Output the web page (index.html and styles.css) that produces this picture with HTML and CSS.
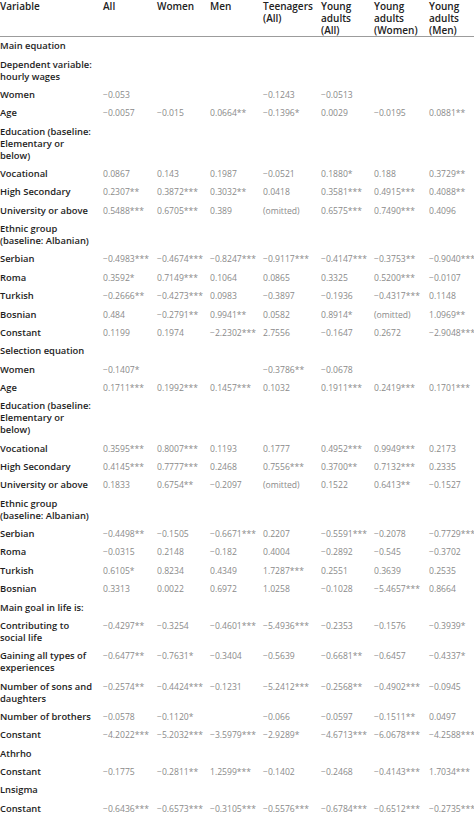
FILE: index.html
```html
<!DOCTYPE html>
<html>
<head>
<meta charset="utf-8">
<link rel="stylesheet" href="styles.css">
</head>
<body>
<table class="tbl">
<colgroup>
<col class="c0"><col class="c1"><col class="c2"><col class="c3"><col class="c4"><col class="c5"><col class="c6"><col class="c7">
</colgroup>
<thead>
<tr>
<th>Variable</th><th>All</th><th>Women</th><th>Men</th><th>Teenagers<br>(All)</th><th>Young<br>adults<br>(All)</th><th>Young<br>adults<br>(Women)</th><th>Young<br>adults<br>(Men)</th>
</tr>
</thead>
<tbody>
<tr><td class="l">Main equation</td><td></td><td></td><td></td><td></td><td></td><td></td><td></td></tr>
<tr><td class="l">Dependent variable:<br>hourly wages</td><td></td><td></td><td></td><td></td><td></td><td></td><td></td></tr>
<tr><td class="l">Women</td><td class="v">−0.053</td><td></td><td></td><td class="v">−0.1243</td><td class="v">−0.0513</td><td></td><td></td></tr>
<tr><td class="l">Age</td><td class="v">−0.0057</td><td class="v">−0.015</td><td class="v">0.0664**</td><td class="v">−0.1396*</td><td class="v">0.0029</td><td class="v">−0.0195</td><td class="v">0.0881**</td></tr>
<tr><td class="l">Education (baseline:<br>Elementary or<br>below)</td><td></td><td></td><td></td><td></td><td></td><td></td><td></td></tr>
<tr><td class="l">Vocational</td><td class="v">0.0867</td><td class="v">0.143</td><td class="v">0.1987</td><td class="v">−0.0521</td><td class="v">0.1880*</td><td class="v">0.188</td><td class="v">0.3729**</td></tr>
<tr><td class="l">High Secondary</td><td class="v">0.2307**</td><td class="v">0.3872***</td><td class="v">0.3032**</td><td class="v">0.0418</td><td class="v">0.3581***</td><td class="v">0.4915***</td><td class="v">0.4088**</td></tr>
<tr><td class="l">University or above</td><td class="v">0.5488***</td><td class="v">0.6705***</td><td class="v">0.389</td><td class="v">(omitted)</td><td class="v">0.6575***</td><td class="v">0.7490***</td><td class="v">0.4096</td></tr>
<tr><td class="l">Ethnic group<br>(baseline: Albanian)</td><td></td><td></td><td></td><td></td><td></td><td></td><td></td></tr>
<tr><td class="l">Serbian</td><td class="v">−0.4983***</td><td class="v">−0.4674***</td><td class="v">−0.8247***</td><td class="v">−0.9117***</td><td class="v">−0.4147***</td><td class="v">−0.3753**</td><td class="v">−0.9040***</td></tr>
<tr><td class="l">Roma</td><td class="v">0.3592*</td><td class="v">0.7149***</td><td class="v">0.1064</td><td class="v">0.0865</td><td class="v">0.3325</td><td class="v">0.5200***</td><td class="v">−0.0107</td></tr>
<tr><td class="l">Turkish</td><td class="v">−0.2666**</td><td class="v">−0.4273***</td><td class="v">0.0983</td><td class="v">−0.3897</td><td class="v">−0.1936</td><td class="v">−0.4317***</td><td class="v">0.1148</td></tr>
<tr><td class="l">Bosnian</td><td class="v">0.484</td><td class="v">−0.2791**</td><td class="v">0.9941**</td><td class="v">0.0582</td><td class="v">0.8914*</td><td class="v">(omitted)</td><td class="v">1.0969**</td></tr>
<tr><td class="l">Constant</td><td class="v">0.1199</td><td class="v">0.1974</td><td class="v">−2.2302***</td><td class="v">2.7556</td><td class="v">−0.1647</td><td class="v">0.2672</td><td class="v">−2.9048***</td></tr>
<tr><td class="l">Selection equation</td><td></td><td></td><td></td><td></td><td></td><td></td><td></td></tr>
<tr><td class="l">Women</td><td class="v">−0.1407*</td><td></td><td></td><td class="v">−0.3786**</td><td class="v">−0.0678</td><td></td><td></td></tr>
<tr><td class="l">Age</td><td class="v">0.1711***</td><td class="v">0.1992***</td><td class="v">0.1457***</td><td class="v">0.1032</td><td class="v">0.1911***</td><td class="v">0.2419***</td><td class="v">0.1701***</td></tr>
<tr><td class="l">Education (baseline:<br>Elementary or<br>below)</td><td></td><td></td><td></td><td></td><td></td><td></td><td></td></tr>
<tr><td class="l">Vocational</td><td class="v">0.3595***</td><td class="v">0.8007***</td><td class="v">0.1193</td><td class="v">0.1777</td><td class="v">0.4952***</td><td class="v">0.9949***</td><td class="v">0.2173</td></tr>
<tr><td class="l">High Secondary</td><td class="v">0.4145***</td><td class="v">0.7777***</td><td class="v">0.2468</td><td class="v">0.7556***</td><td class="v">0.3700**</td><td class="v">0.7132***</td><td class="v">0.2335</td></tr>
<tr><td class="l">University or above</td><td class="v">0.1833</td><td class="v">0.6754**</td><td class="v">−0.2097</td><td class="v">(omitted)</td><td class="v">0.1522</td><td class="v">0.6413**</td><td class="v">−0.1527</td></tr>
<tr><td class="l">Ethnic group<br>(baseline: Albanian)</td><td></td><td></td><td></td><td></td><td></td><td></td><td></td></tr>
<tr><td class="l">Serbian</td><td class="v">−0.4498**</td><td class="v">−0.1505</td><td class="v">−0.6671***</td><td class="v">0.2207</td><td class="v">−0.5591***</td><td class="v">−0.2078</td><td class="v">−0.7729***</td></tr>
<tr><td class="l">Roma</td><td class="v">−0.0315</td><td class="v">0.2148</td><td class="v">−0.182</td><td class="v">0.4004</td><td class="v">−0.2892</td><td class="v">−0.545</td><td class="v">−0.3702</td></tr>
<tr><td class="l">Turkish</td><td class="v">0.6105*</td><td class="v">0.8234</td><td class="v">0.4349</td><td class="v">1.7287***</td><td class="v">0.2551</td><td class="v">0.3639</td><td class="v">0.2535</td></tr>
<tr><td class="l">Bosnian</td><td class="v">0.3313</td><td class="v">0.0022</td><td class="v">0.6972</td><td class="v">1.0258</td><td class="v">−0.1028</td><td class="v">−5.4657***</td><td class="v">0.8664</td></tr>
<tr><td class="l">Main goal in life is:</td><td></td><td></td><td></td><td></td><td></td><td></td><td></td></tr>
<tr><td class="l">Contributing to<br>social life</td><td class="v">−0.4297**</td><td class="v">−0.3254</td><td class="v">−0.4601***</td><td class="v">−5.4936***</td><td class="v">−0.2353</td><td class="v">−0.1576</td><td class="v">−0.3939*</td></tr>
<tr><td class="l">Gaining all types of<br>experiences</td><td class="v">−0.6477**</td><td class="v">−0.7631*</td><td class="v">−0.3404</td><td class="v">−0.5639</td><td class="v">−0.6681**</td><td class="v">−0.6457</td><td class="v">−0.4337*</td></tr>
<tr><td class="l">Number of sons and<br>daughters</td><td class="v">−0.2574**</td><td class="v">−0.4424***</td><td class="v">−0.1231</td><td class="v">−5.2412***</td><td class="v">−0.2568**</td><td class="v">−0.4902***</td><td class="v">−0.0945</td></tr>
<tr><td class="l">Number of brothers</td><td class="v">−0.0578</td><td class="v">−0.1120*</td><td></td><td class="v">−0.066</td><td class="v">−0.0597</td><td class="v">−0.1511**</td><td class="v">0.0497</td></tr>
<tr><td class="l">Constant</td><td class="v">−4.2022***</td><td class="v">−5.2032***</td><td class="v">−3.5979***</td><td class="v">−2.9289*</td><td class="v">−4.6713***</td><td class="v">−6.0678***</td><td class="v">−4.2588***</td></tr>
<tr><td class="l">Athrho</td><td></td><td></td><td></td><td></td><td></td><td></td><td></td></tr>
<tr><td class="l">Constant</td><td class="v">−0.1775</td><td class="v">−0.2811**</td><td class="v">1.2599***</td><td class="v">−0.1402</td><td class="v">−0.2468</td><td class="v">−0.4143***</td><td class="v">1.7034***</td></tr>
<tr><td class="l">Lnsigma</td><td></td><td></td><td></td><td></td><td></td><td></td><td></td></tr>
<tr><td class="l">Constant</td><td class="v">−0.6436***</td><td class="v">−0.6573***</td><td class="v">−0.3105***</td><td class="v">−0.5576***</td><td class="v">−0.6784***</td><td class="v">−0.6512***</td><td class="v">−0.2735***</td></tr>
</tbody>
</table>
</body>
</html>
```
FILE: styles.css
```css
html, body {
  margin: 0;
  padding: 0;
  background: #ffffff;
}
.tbl {
  border-collapse: collapse;
  table-layout: fixed;
  width: 474px;
  font-family: "Open Sans", "DejaVu Sans", sans-serif;
}
.c0 { width: 103px; }
.c1 { width: 54px; }
.c2 { width: 53px; }
.c3 { width: 53px; }
.c4 { width: 58px; }
.c5 { width: 53px; }
.c6 { width: 55px; }
.c7 { width: 45px; }
.tbl th {
  text-align: left;
  vertical-align: top;
  font-weight: 600;
  font-size: 10px;
  line-height: 12px;
  color: #222222;
  padding: 0;
  border-bottom: 1px solid #9c9c9c;
  white-space: nowrap;
}
.tbl td {
  vertical-align: top;
  padding: 3.19px 0 3.18px 0;
  line-height: 12px;
}
.l {
  font-weight: 600;
  font-size: 9.4px;
  color: #1e1e1e;
  white-space: nowrap;
}
.v {
  font-weight: 400;
  font-size: 8.6px;
  color: #8a8a8a;
  white-space: nowrap;
  overflow: visible;
}
```
